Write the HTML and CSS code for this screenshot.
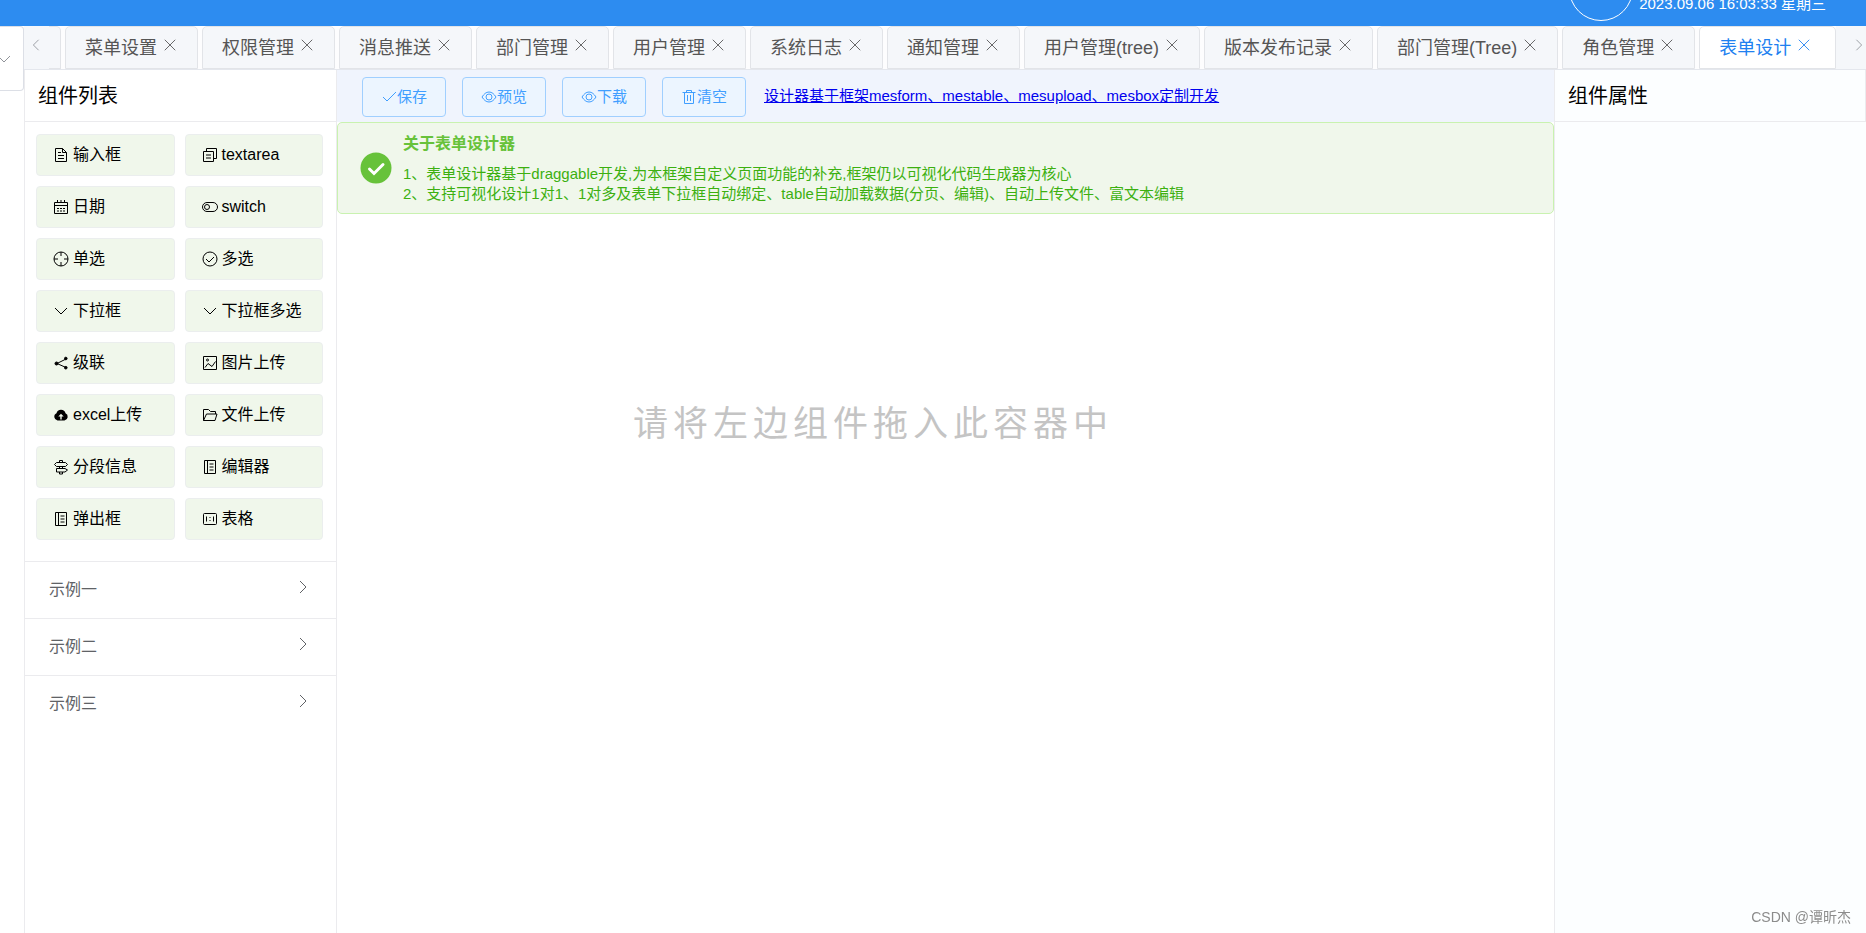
FILE: index.html
```html
<!DOCTYPE html>
<html lang="zh-CN">
<head>
    <meta charset="UTF-8">
    <meta name="viewport" content="width=device-width, initial-scale=1.0">
    <title>表单设计</title>
    <link rel="stylesheet" href="styles.css">
</head>
<body>
    <svg class="sprite" aria-hidden="true">
        <symbol id="i-close" viewBox="0 0 16 16"><path d="M2 2l12 12M14 2L2 14"/></symbol>
        <symbol id="i-left" viewBox="0 0 16 16"><path d="M11 2L5 8l6 6"/></symbol>
        <symbol id="i-right" viewBox="0 0 16 16"><path d="M5 2l6 6-6 6"/></symbol>
        <symbol id="i-down" viewBox="0 0 16 16"><path d="M2 5l6 6 6-6"/></symbol>
        <symbol id="i-check" viewBox="0 0 16 16"><path d="M2 8l4 4 9-9"/></symbol>
        <symbol id="i-view" viewBox="0 0 16 16"><path d="M1 8c2-3 4-5 7-5s5 2 7 5c-2 3-4 5-7 5s-5-2-7-5z"/><circle cx="8" cy="8" r="3"/></symbol>
        <symbol id="i-delete" viewBox="0 0 16 16"><path d="M1.500 3.500h13M5.500 3.500v-2h5v2M3.500 3.500v11h9v-11M6.500 6v6M9.500 6v6"/></symbol>
        <symbol id="i-document" viewBox="0 0 16 16"><path d="M2.500 1.500h7l4 4v9h-11zM9.500 1.500v4h4M5 5.500h3M5 8.500h6M5 11.500h6"/></symbol>
        <symbol id="i-copy" viewBox="0 0 16 16"><path d="M1.500 4.500h10v10h-10zM4.500 4.500v-3h10v10h-3M4 8h5M4 11h5"/></symbol>
        <symbol id="i-date" viewBox="0 0 16 16"><path d="M1.500 3.500h13v11h-13zM1.500 6.500h13M4.500 1v3M8 1v3M11.500 1v3M4 9.500h2M7 9.500h2M10 9.500h2M4 12h2M7 12h2M10 12h2"/></symbol>
        <symbol id="i-open" viewBox="0 0 16 16"><rect x="0.500" y="3.500" width="15" height="9" rx="4.500"/><circle cx="5" cy="8" r="2.500"/></symbol>
        <symbol id="i-aim" viewBox="0 0 16 16"><circle cx="8" cy="8" r="7"/><path d="M8 1v4M8 11v4M1 8h4M11 8h4"/></symbol>
        <symbol id="i-circle-check" viewBox="0 0 16 16"><circle cx="8" cy="8" r="7"/><path d="M4 8l3 3 5-5"/></symbol>
        <symbol id="i-share" viewBox="0 0 16 16"><path d="M13 4L4 8.500l9 4"/><g fill="currentColor"><circle cx="12.800" cy="3.500" r="1.300"/><circle cx="3.500" cy="8.500" r="1.500"/><circle cx="12.800" cy="12.700" r="1.300"/></g></symbol>
        <symbol id="i-picture" viewBox="0 0 16 16"><path d="M1.500 1.500h13v13h-13zM3 12.500l3-4 4 3 3.500-5"/><circle cx="5.500" cy="5" r="1"/></symbol>
        <symbol id="i-upload" viewBox="0 0 16 16"><path fill="currentColor" fill-rule="evenodd" stroke="none" d="M4.500 13.500A3.800 3.800 0 0 1 3.500 6.300a4.600 4.600 0 0 1 9 0a3.800 3.800 0 0 1-1 7.200zM7.300 12.500h1.400V9.500h2L8 6.700 5.300 9.500h2z"/></symbol>
        <symbol id="i-folder" viewBox="0 0 16 16"><path d="M1.500 13.500v-11h5l2 2h5v2.500M1.500 13.500l3-6.500h10.500l-2 6.500z"/></symbol>
        <symbol id="i-guide" viewBox="0 0 16 16"><path d="M3.500 3.500h9l2 2-2 2h-9l-2-2zM3.500 9.500h8.500l2.500 1.500-2.500 2H3.500zM6.500 3.500v-2h3v2M6.500 13v2h3v-2M6.500 7.500v2M9.500 7.500v2"/></symbol>
        <symbol id="i-notebook" viewBox="0 0 16 16"><path d="M2.500 1.500h11v13h-11zM5.500 1.500v13M7.500 5h4M7.500 8h4M7.500 11h4"/></symbol>
        <symbol id="i-ratio" viewBox="0 0 16 16"><rect x="1.500" y="2.500" width="13" height="11" rx="1"/><path d="M4.500 5.500v5M11.500 5.500v5M8 6v1M8 9v1"/></symbol>
    </svg>

    <header class="top-bar">
        <div class="avatar"></div>
        <time class="clock">2023.09.06 16:03:33 星期三</time>
    </header>

    <div class="page">
        <aside class="side-menu">
            <div class="side-item"><svg class="icon"><use href="#i-down"/></svg></div>
        </aside>

        <div class="content">
            <nav class="tabs">
                <button class="tabs-arrow prev" aria-label="向左"><svg class="icon"><use href="#i-left"/></svg></button>
                <div class="tabs-scroll">
                    <div class="tab cut"></div>
                    <div class="tab"><span>菜单设置</span><button aria-label="关闭"><svg class="icon"><use href="#i-close"/></svg></button></div>
                    <div class="tab"><span>权限管理</span><button aria-label="关闭"><svg class="icon"><use href="#i-close"/></svg></button></div>
                    <div class="tab"><span>消息推送</span><button aria-label="关闭"><svg class="icon"><use href="#i-close"/></svg></button></div>
                    <div class="tab"><span>部门管理</span><button aria-label="关闭"><svg class="icon"><use href="#i-close"/></svg></button></div>
                    <div class="tab"><span>用户管理</span><button aria-label="关闭"><svg class="icon"><use href="#i-close"/></svg></button></div>
                    <div class="tab"><span>系统日志</span><button aria-label="关闭"><svg class="icon"><use href="#i-close"/></svg></button></div>
                    <div class="tab"><span>通知管理</span><button aria-label="关闭"><svg class="icon"><use href="#i-close"/></svg></button></div>
                    <div class="tab"><span>用户管理(tree)</span><button aria-label="关闭"><svg class="icon"><use href="#i-close"/></svg></button></div>
                    <div class="tab"><span>版本发布记录</span><button aria-label="关闭"><svg class="icon"><use href="#i-close"/></svg></button></div>
                    <div class="tab"><span>部门管理(Tree)</span><button aria-label="关闭"><svg class="icon"><use href="#i-close"/></svg></button></div>
                    <div class="tab"><span>角色管理</span><button aria-label="关闭"><svg class="icon"><use href="#i-close"/></svg></button></div>
                    <div class="tab active"><span>表单设计</span><button aria-label="关闭"><svg class="icon"><use href="#i-close"/></svg></button></div>
                </div>
                <button class="tabs-arrow next" aria-label="向右"><svg class="icon"><use href="#i-right"/></svg></button>
            </nav>

            <div class="designer">
                <section class="left-panel">
                    <h2 class="panel-title">组件列表</h2>
                    <div class="components">
                        <button class="component"><svg class="icon"><use href="#i-document"/></svg>输入框</button>
                        <button class="component"><svg class="icon"><use href="#i-copy"/></svg>textarea</button>
                        <button class="component"><svg class="icon"><use href="#i-date"/></svg>日期</button>
                        <button class="component"><svg class="icon"><use href="#i-open"/></svg>switch</button>
                        <button class="component"><svg class="icon"><use href="#i-aim"/></svg>单选</button>
                        <button class="component"><svg class="icon"><use href="#i-circle-check"/></svg>多选</button>
                        <button class="component"><svg class="icon"><use href="#i-down"/></svg>下拉框</button>
                        <button class="component"><svg class="icon"><use href="#i-down"/></svg>下拉框多选</button>
                        <button class="component"><svg class="icon"><use href="#i-share"/></svg>级联</button>
                        <button class="component"><svg class="icon"><use href="#i-picture"/></svg>图片上传</button>
                        <button class="component"><svg class="icon"><use href="#i-upload"/></svg>excel上传</button>
                        <button class="component"><svg class="icon"><use href="#i-folder"/></svg>文件上传</button>
                        <button class="component"><svg class="icon"><use href="#i-guide"/></svg>分段信息</button>
                        <button class="component"><svg class="icon"><use href="#i-notebook"/></svg>编辑器</button>
                        <button class="component"><svg class="icon"><use href="#i-notebook"/></svg>弹出框</button>
                        <button class="component"><svg class="icon"><use href="#i-ratio"/></svg>表格</button>
                    </div>
                    <div class="examples">
                        <button class="example">示例一<svg class="icon"><use href="#i-right"/></svg></button>
                        <button class="example">示例二<svg class="icon"><use href="#i-right"/></svg></button>
                        <button class="example">示例三<svg class="icon"><use href="#i-right"/></svg></button>
                    </div>
                </section>

                <main class="center-panel">
                    <div class="toolbar">
                        <button class="btn"><svg class="icon"><use href="#i-check"/></svg>保存</button>
                        <button class="btn"><svg class="icon"><use href="#i-view"/></svg>预览</button>
                        <button class="btn"><svg class="icon"><use href="#i-view"/></svg>下载</button>
                        <button class="btn"><svg class="icon"><use href="#i-delete"/></svg>清空</button>
                        <a href="#">设计器基于框架mesform、mestable、mesupload、mesbox定制开发</a>
                    </div>
                    <div class="alert">
                        <svg class="alert-icon" viewBox="0 0 32 32"><circle cx="16" cy="16" r="15.500"/><path d="M9.500 17l4.500 4.500 9-9"/></svg>
                        <div>
                            <h3>关于表单设计器</h3>
                            <p>1、表单设计器基于draggable开发,为本框架自定义页面功能的补充,框架仍以可视化代码生成器为核心</p>
                            <p>2、支持可视化设计1对1、1对多及表单下拉框自动绑定、table自动加载数据(分页、编辑)、自动上传文件、富文本编辑</p>
                        </div>
                    </div>
                    <div class="canvas">请将左边组件拖入此容器中</div>
                </main>

                <section class="right-panel">
                    <h2 class="panel-title">组件属性</h2>
                </section>
            </div>
        </div>
    </div>

    <div class="watermark">CSDN @谭昕杰</div>
</body>
</html>
```
FILE: styles.css
```css
* {
    box-sizing: border-box;
}
body {
    margin: 0;
    height: 100vh;
    display: flex;
    flex-direction: column;
    overflow: hidden;
    font-family: "Liberation Sans", "Noto Sans CJK SC", sans-serif;
    font-size: 16px;
    line-height: 20px;
    color: #000;
    background: #fff;
}
button {
    font: inherit;
    color: inherit;
    margin: 0;
    padding: 0;
    border: none;
    background: none;
    cursor: pointer;
}
h2, h3, p {
    margin: 0;
}
.sprite {
    display: none;
}
.icon {
    width: 16px;
    height: 16px;
    flex: none;
    fill: none;
    stroke: currentColor;
    stroke-width: 1;
}

/* 顶部 */
.top-bar {
    height: 26px;
    flex: none;
    display: flex;
    justify-content: flex-end;
    align-items: flex-end;
    gap: 6px;
    padding-right: 40px;
    overflow: hidden;
    background: #2d8cf0;
    color: #fff;
}
.avatar {
    width: 64px;
    height: 64px;
    margin-bottom: 5px;
    border: 1px solid #fff;
    border-radius: 50%;
}
.clock {
    font-size: 15px;
    margin-bottom: 12px;
}
.page {
    flex: 1;
    min-height: 0;
    display: flex;
}
.side-menu {
    width: 24px;
    flex: none;
}
.side-item {
    height: 65px;
    display: flex;
    align-items: center;
    border: 1px solid #dcdfe6;
    border-left: none;
    border-radius: 0 4px 4px 0;
    overflow: hidden;
    color: #909399;
}
.side-item .icon {
    margin-left: -4px;
}
.content {
    flex: 1;
    min-width: 0;
    display: flex;
    flex-direction: column;
}

/* 标签页 */
.tabs {
    height: 44px;
    flex: none;
    display: flex;
    background: #f5f7fa;
    border-bottom: 1px solid #e4e7ed;
}
.tabs-arrow {
    flex: none;
    padding-bottom: 5px;
    color: #909399;
    line-height: 0;
}
.tabs-arrow.prev {
    width: 25px;
    padding-right: 2px;
}
.tabs-arrow.next {
    width: 30px;
    padding-left: 16px;
}
.tabs-arrow .icon,
.tab .icon {
    width: 14px;
    height: 14px;
}
.tabs-scroll {
    flex: 1;
    min-width: 0;
    display: flex;
    gap: 4px;
    overflow: hidden;
    background: #fdfdfe;
}
.tab {
    flex: none;
    display: flex;
    align-items: center;
    gap: 6px;
    padding: 0 20px 0 19px;
    border: 1px solid #e2e4e8;
    border-radius: 5px 5px 0 0;
    background: #f5f7fa;
    color: #555;
    font-size: 18px;
    line-height: 24px;
    white-space: nowrap;
}
.tab.cut {
    width: 12px;
    padding: 0;
    border-left: none;
    border-radius: 0 5px 0 0;
}
.tab.active {
    flex: 1;
    background: #fff;
    color: #2080f0;
}
.tab button {
    line-height: 0;
    padding-bottom: 5px;
}

/* 设计器 */
.designer {
    flex: 1;
    min-height: 0;
    display: flex;
}
.left-panel {
    width: 313px;
    flex: none;
    border: 1px solid #ebebee;
    border-width: 0 1px;
}
.right-panel {
    width: 312px;
    flex: none;
    border-left: 1px solid #ebebee;
    background: #fcfeff;
}
.panel-title {
    height: 52px;
    padding: 0 13px;
    border-bottom: 1px solid #ebebee;
    font-size: 20px;
    font-weight: normal;
    line-height: 53px;
}
.right-panel .panel-title {
    border-right: 1px solid #ebebee;
}
.components {
    display: grid;
    grid-template-columns: 1fr 1fr;
    gap: 10px;
    padding: 12px 13px 21px 11px;
}
.component {
    height: 42px;
    display: flex;
    align-items: center;
    gap: 4px;
    padding: 0 16px;
    border: 1px solid #ebeeee;
    border-radius: 4px;
    background: #f0f7eb;
}
.example {
    width: 100%;
    height: 57px;
    display: flex;
    align-items: center;
    justify-content: space-between;
    padding: 0 25px 0 24px;
    border-top: 1px solid #ebebee;
    color: #606266;
}
.example .icon {
    margin-bottom: 6px;
}
.center-panel {
    flex: 1;
    min-width: 0;
    display: flex;
    flex-direction: column;
}
.toolbar {
    height: 52px;
    flex: none;
    display: flex;
    align-items: center;
    gap: 16px;
    padding: 2px 0 0 25px;
    background: #f0f4fd;
    font-size: 15px;
}
.toolbar a {
    margin-left: 2px;
    padding-bottom: 2px;
    color: #0000ee;
}
.btn {
    width: 84px;
    height: 40px;
    display: flex;
    align-items: center;
    justify-content: center;
    border: 1px solid #a0cfff;
    border-radius: 4px;
    background: #ecf5ff;
    color: #409eff;
}
.alert {
    height: 92px;
    flex: none;
    display: flex;
    align-items: center;
    gap: 11px;
    padding: 0 22px;
    border: 1px solid #c9f2b0;
    border-radius: 5px;
    background: #f0f7eb;
    color: #3cb010;
    font-size: 15px;
}
.alert-icon {
    width: 32px;
    height: 32px;
    flex: none;
    fill: #67c23a;
}
.alert-icon path {
    fill: none;
    stroke: #fff;
    stroke-width: 3;
    stroke-linecap: round;
}
.alert h3 {
    margin-bottom: 8px;
    color: #67c23a;
    font-size: 16px;
    line-height: 24px;
}
.canvas {
    flex: 1;
    padding: 184px 145px 0 0;
    text-align: center;
    font-size: 35px;
    line-height: 52px;
    letter-spacing: 5px;
    color: #c4c4c4;
}

.watermark {
    position: fixed;
    right: 15px;
    bottom: 6px;
    font-size: 14px;
    color: #8c8c8c;
}
```
